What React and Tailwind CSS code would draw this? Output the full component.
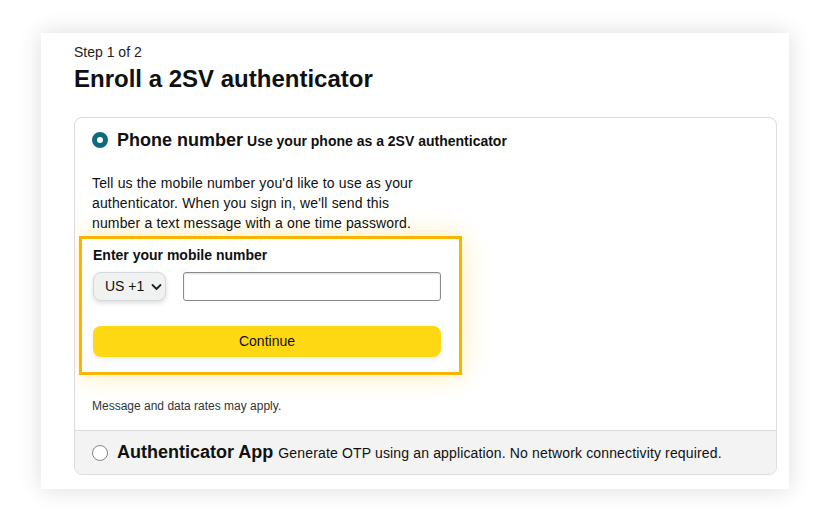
export default function App() {
  return (
    <div className="w-[830px] h-[522px] bg-white pl-[41px] pt-[33px]" style={{ fontFamily: '"Liberation Sans", Arial, sans-serif' }}>
      <div className="w-[748px] h-[456px] bg-white shadow-[0_0_22px_rgba(0,0,0,0.14)] pl-[33px] pr-[12px] pt-[10px]">
        <div className="text-[14px] leading-[18px] text-[#222]">Step 1 of 2</div>
        <h1 className="text-[24px] leading-[30px] font-bold text-[#0f1111] mt-[3px]">Enroll a 2SV authenticator</h1>
        <div className="mt-[23px] w-[703px] h-[358px] border border-[#dcdcdc] rounded-[8px] flex flex-col overflow-hidden">
          <div className="flex-1 pl-[17px] pt-[11px]">
            <div className="flex items-center h-[22px]">
              <span className="w-[16px] h-[16px] rounded-full border-[5px] border-[#0e6a80] bg-white shrink-0"></span>
              <span className="ml-[9px] text-[18px] font-bold text-[#0f1111]">Phone number</span>
              <span className="ml-[4px] text-[14px] font-bold text-[#0f1111] mt-[2px]">Use your phone as a 2SV authenticator</span>
            </div>
            <p className="mt-[22px] text-[14px] leading-[20px] text-[#0f1111] w-[345px] tracking-[0.15px]">
              Tell us the mobile number you'd like to use as your authenticator. When you sign in, we'll send this number a text message with a one time password.
            </p>
            <div className="ml-[-13px] mt-[3px] w-[383px] h-[139px] border-[3px] border-[#f7b500] shadow-[0_0_24px_rgba(255,196,0,0.32)] bg-white pl-[11px] pt-[7px]">
              <div className="text-[14px] leading-[18px] font-bold text-[#0f1111]">Enter your mobile number</div>
              <div className="flex mt-[8px]">
                <div className="w-[73px] h-[29px] rounded-[8px] bg-[#f0f2f2] border border-[#d5d9d9] shadow-[0_2px_5px_rgba(15,17,17,0.15)] flex items-center pl-[11px] text-[14px] text-[#0f1111]">
                  US +1
                  <svg className="ml-[7px]" width="11" height="8" viewBox="0 0 11 8" fill="none" stroke="#222" strokeWidth="1.8" strokeLinecap="round" strokeLinejoin="round"><path d="M1.5 2 L5.5 6 L9.5 2" /></svg>
                </div>
                <div className="ml-[17px] w-[258px] h-[29px] rounded-[3px] border border-[#888c8c] shadow-[inset_0_1px_2px_rgba(15,17,17,0.15)] bg-white"></div>
              </div>
              <div className="mt-[25px] w-[348px] h-[31px] rounded-[8px] bg-[#ffd814] shadow-[0_2px_5px_rgba(213,217,217,0.5)] flex items-center justify-center text-[14px] text-[#0f1111]">
                Continue
              </div>
            </div>
            <div className="mt-[23px] text-[12px] leading-[16px] text-[#333]">Message and data rates may apply.</div>
          </div>
          <div className="h-[44px] bg-[#f3f3f3] border-t border-[#dcdcdc] flex items-center pl-[17px]">
            <span className="w-[16px] h-[16px] rounded-full border border-[#888] bg-white shrink-0"></span>
            <span className="ml-[9px] text-[18px] font-bold text-[#0f1111]">Authenticator App</span>
            <span className="ml-[5px] text-[14px] text-[#0f1111] mt-[2px] tracking-[0.15px]">Generate OTP using an application. No network connectivity required.</span>
          </div>
        </div>
      </div>
    </div>
  );
}
